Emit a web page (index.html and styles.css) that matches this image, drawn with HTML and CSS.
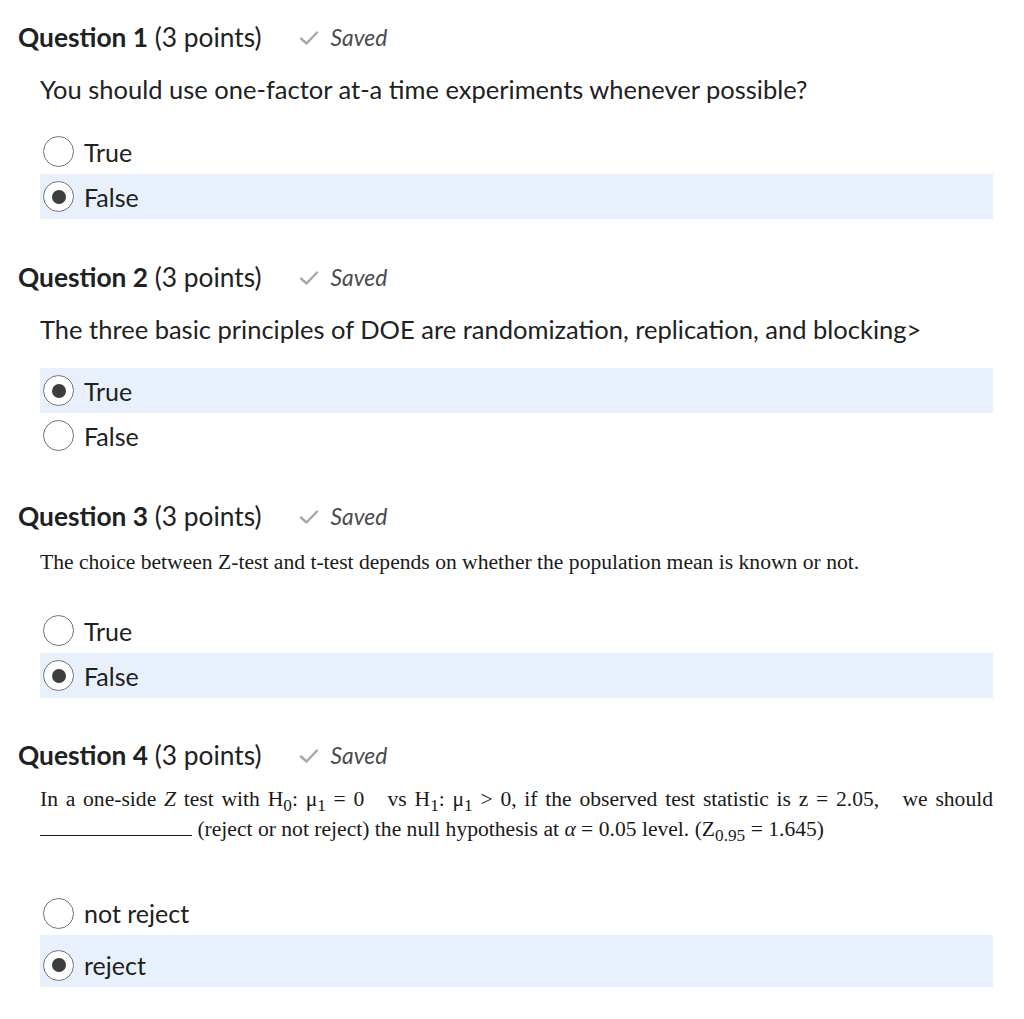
FILE: index.html
```html
<!DOCTYPE html>
<html>
<head>
<meta charset="utf-8">
<link rel="stylesheet" href="styles.css">
</head>
<body>
<div class="quiz">

  <section class="q q1">
    <div class="q-head">
      <span class="q-title"><b>Question 1</b> (3 points)</span>
      <span class="saved"><svg class="check" viewBox="0 0 20 16" width="20" height="16"><path d="M2 8.5 L7.5 13.5 L18 2.5" fill="none" stroke="#a3a8ad" stroke-width="2.4" stroke-linecap="round" stroke-linejoin="round"/></svg><i>Saved</i></span>
    </div>
    <p class="q-text sans">You should use one-factor at-a time experiments whenever possible?</p>
    <div class="opts">
      <div class="opt"><span class="radio"></span><span>True</span></div>
      <div class="opt sel"><span class="radio on"></span><span>False</span></div>
    </div>
  </section>

  <section class="q q2">
    <div class="q-head">
      <span class="q-title"><b>Question 2</b> (3 points)</span>
      <span class="saved"><svg class="check" viewBox="0 0 20 16" width="20" height="16"><path d="M2 8.5 L7.5 13.5 L18 2.5" fill="none" stroke="#a3a8ad" stroke-width="2.4" stroke-linecap="round" stroke-linejoin="round"/></svg><i>Saved</i></span>
    </div>
    <p class="q-text sans">The three basic principles of DOE are randomization, replication, and blocking&gt;</p>
    <div class="opts">
      <div class="opt sel"><span class="radio on"></span><span>True</span></div>
      <div class="opt"><span class="radio"></span><span>False</span></div>
    </div>
  </section>

  <section class="q q3">
    <div class="q-head">
      <span class="q-title"><b>Question 3</b> (3 points)</span>
      <span class="saved"><svg class="check" viewBox="0 0 20 16" width="20" height="16"><path d="M2 8.5 L7.5 13.5 L18 2.5" fill="none" stroke="#a3a8ad" stroke-width="2.4" stroke-linecap="round" stroke-linejoin="round"/></svg><i>Saved</i></span>
    </div>
    <p class="q-text serif">The choice between Z-test and t-test depends on whether the population mean is known or not.</p>
    <div class="opts">
      <div class="opt"><span class="radio"></span><span>True</span></div>
      <div class="opt sel"><span class="radio on"></span><span>False</span></div>
    </div>
  </section>

  <section class="q q4">
    <div class="q-head">
      <span class="q-title"><b>Question 4</b> (3 points)</span>
      <span class="saved"><svg class="check" viewBox="0 0 20 16" width="20" height="16"><path d="M2 8.5 L7.5 13.5 L18 2.5" fill="none" stroke="#a3a8ad" stroke-width="2.4" stroke-linecap="round" stroke-linejoin="round"/></svg><i>Saved</i></span>
    </div>
    <div class="q-text serif q4-text">
      <span class="line-just">In a one-side <i>Z</i> test with H<sub>0</sub>: &mu;<sub>1</sub> = 0&nbsp;&nbsp; vs H<sub>1</sub>: &mu;<sub>1</sub> &gt; 0, if the observed test statistic is z = 2.05,&nbsp;&nbsp; we should</span>
      <span class="line"><span class="blank"></span> (reject or not reject) the null hypothesis at <i>&alpha;</i> = 0.05 level. (Z<sub>0.95</sub> = 1.645)</span>
    </div>
    <div class="opts tall">
      <div class="opt"><span class="radio"></span><span>not reject</span></div>
      <div class="opt sel"><span class="radio on"></span><span>reject</span></div>
    </div>
  </section>

</div>
</body>
</html>
```

FILE: styles.css
```css
html, body {
  margin: 0;
  padding: 0;
  background: #ffffff;
}

body {
  font-family: Lato, "Noto Sans", sans-serif;
  color: #202122;
}

.quiz {
  width: 993px;
  padding-top: 19px;
}

.q {
  margin-bottom: 40px;
}

.q3 {
  margin-bottom: 39px;
}

.q-head {
  display: flex;
  align-items: center;
  height: 36px;
  padding-left: 18px;
  gap: 38px;
}

.q-title {
  font-size: 26.3px;
  color: #202122;
}

.q-title b {
  font-weight: 700;
}

.saved {
  display: flex;
  align-items: center;
  gap: 11px;
  font-size: 22.8px;
  color: #494c4e;
}

.check {
  display: block;
  margin-top: 1px;
}

.q-text {
  margin: 19px 0 0 40px;
  line-height: 30px;
}

.q-text.sans {
  font-size: 25.5px;
}

.q-text.serif {
  font-family: "Liberation Serif", "Times New Roman", serif;
  font-size: 21.6px;
  color: #1a1a1a;
}

.q3 .q-text {
  margin-top: 13px;
}

.q4-text {
  margin-top: 11px;
}

.line-just {
  display: block;
  text-align: justify;
  text-align-last: justify;
}

.line {
  display: block;
}

.q-text sub {
  font-size: 0.8em;
  line-height: 0;
  vertical-align: -0.3em;
}

.blank {
  display: inline-block;
  width: 152px;
  border-bottom: 1px solid #1a1a1a;
  height: 18px;
  vertical-align: baseline;
}

.opts {
  margin: 25px 0 0 40px;
}

.q2 .opts {
  margin-top: 24px;
}

.q3 .opts {
  margin-top: 31px;
}

.q4 .opts {
  margin-top: 39px;
}

.opt {
  display: flex;
  align-items: center;
  gap: 10px;
  height: 45px;
  padding-left: 3px;
  font-size: 25px;
}

.opt.sel {
  background: #e8f1fb;
}

.opts.tall .opt {
  height: 52px;
  padding-top: 8px;
  box-sizing: border-box;
}

.radio {
  width: 31px;
  height: 31px;
  box-sizing: border-box;
  border: 1.5px solid #6f7478;
  border-radius: 50%;
  background: #ffffff;
  display: flex;
  align-items: center;
  justify-content: center;
  flex: none;
}

.radio.on::after {
  content: "";
  width: 14px;
  height: 14px;
  border-radius: 50%;
  background: #3b3d3f;
}
```
